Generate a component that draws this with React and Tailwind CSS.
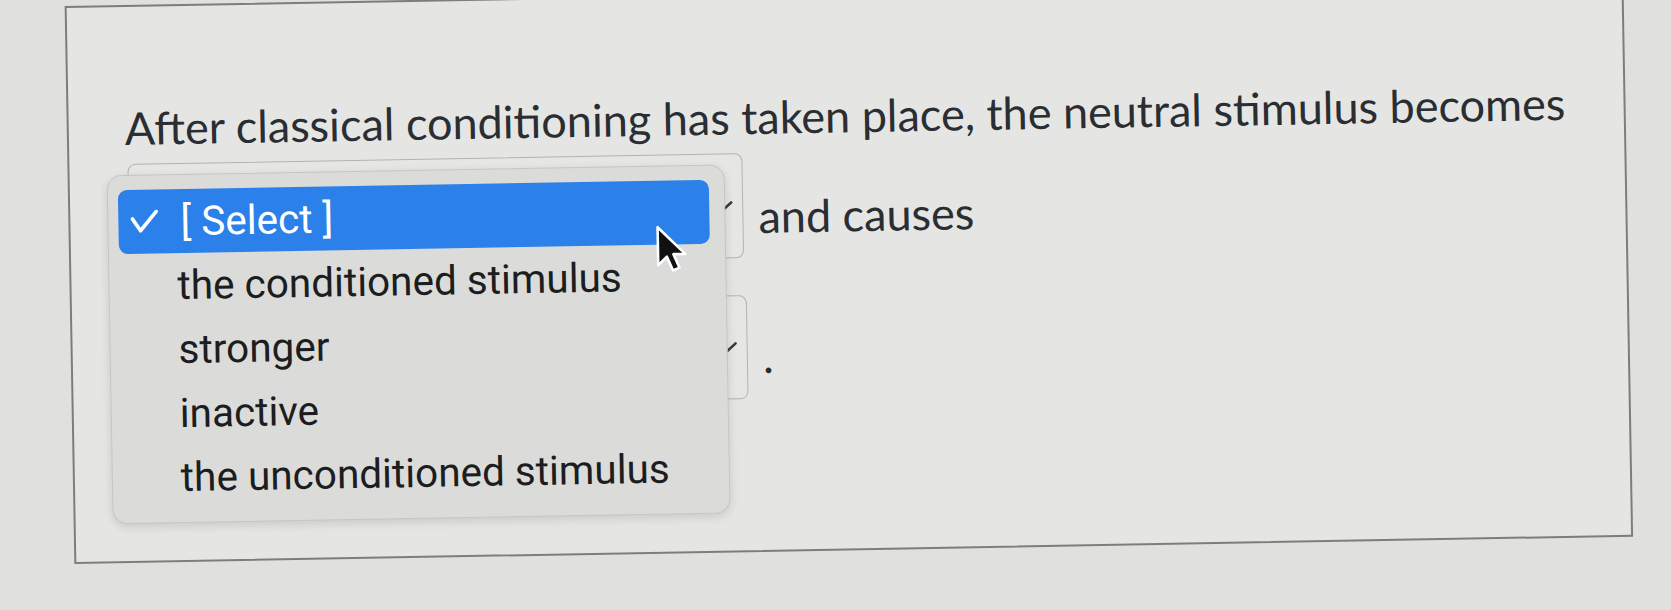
import React from 'react';

const options = ['the conditioned stimulus', 'stronger', 'inactive', 'the unconditioned stimulus'];

const Chevron = () => (
    <svg width="22" height="12" viewBox="0 0 22 12" className="shrink-0">
        <path d="M2 2 L11 10 L20 2" fill="none" stroke="#3a3a3a" strokeWidth="2.6" strokeLinecap="round" strokeLinejoin="round" />
    </svg>
);

const SelectBox = ({ className }) => (
    <div className={`flex items-center justify-end pr-[9px] border-[1.5px] border-[#b3b4b2] rounded-[8px] bg-[#e6e7e5] ${className}`}>
        <Chevron />
    </div>
);

const App = () => {
    return (
        <div className="w-full h-[610px] overflow-hidden bg-[#e0e1df]">
            {/* whole page is photographed slightly tilted */}
            <div className="-rotate-[1deg] origin-[125px_142px] pt-[5px] pl-[67px]">
                <div className="relative w-[1559px] h-[558px] border-2 border-[#7c7d7c] bg-[#e5e6e4] pt-[94px] pl-[56px]" style={{ fontFamily: 'Lato, "Open Sans", sans-serif' }}>
                    <p className="text-[45px] leading-[1.2] text-[#2a2e33] whitespace-nowrap">
                        After classical conditioning has taken place, the neutral stimulus becomes
                    </p>

                    <div className="flex items-start mt-[9px] ml-[2px]">
                        <SelectBox className="w-[615px] h-[105px]" />
                        <span className="ml-[15px] mt-[36px] text-[45px] leading-[1.2] text-[#2a2e33]">and causes</span>
                    </div>

                    <div className="flex items-start mt-[37px] ml-[2px]">
                        <SelectBox className="w-[617px] h-[104px]" />
                        <span className="ml-[15px] mt-[34px] text-[45px] leading-[1.2] text-[#2a2e33]">.</span>
                    </div>

                    {/* open native dropdown */}
                    <div
                        className="absolute left-[37px] top-[168px] w-[618px] h-[349px] rounded-[15px] border border-[#c6c7c5] bg-[#dbdcda] shadow-[0_3px_10px_rgba(0,0,0,0.12)] pt-[14px]"
                        style={{ fontFamily: 'Roboto, "Noto Sans", sans-serif' }}
                    >
                        <div className="flex items-center h-[64px] ml-[10px] mr-[15px] rounded-[9px] bg-[#2b80ea] text-white text-[40.5px] leading-[64px]">
                            <span className="w-[62px] shrink-0 flex pl-[12px]">
                                <svg width="28" height="24" viewBox="0 0 28 24">
                                    <path d="M2 9 L10 21 L26 2" fill="none" stroke="#ffffff" strokeWidth="3.6" strokeLinecap="round" strokeLinejoin="round" />
                                </svg>
                            </span>
                            <span>[ Select ]</span>
                        </div>
                        {options.map((opt) => (
                            <div key={opt} className="h-[64px] ml-[10px] mr-[15px] pl-[58px] text-[40.5px] leading-[64px] text-[#1c1d1e]">
                                {opt}
                            </div>
                        ))}
                    </div>

                    {/* mouse pointer */}
                    <svg className="absolute left-[585px] top-[227px]" width="32" height="51" viewBox="0 0 16 25">
                        <path d="M1 1 L1 20 L5.4 15.8 L8.4 22.8 L11.6 21.4 L8.7 14.6 L14.6 14.6 Z" fill="#111111" stroke="#ffffff" strokeWidth="1.3" strokeLinejoin="round" />
                    </svg>
                </div>
            </div>
        </div>
    );
};

export default App;
